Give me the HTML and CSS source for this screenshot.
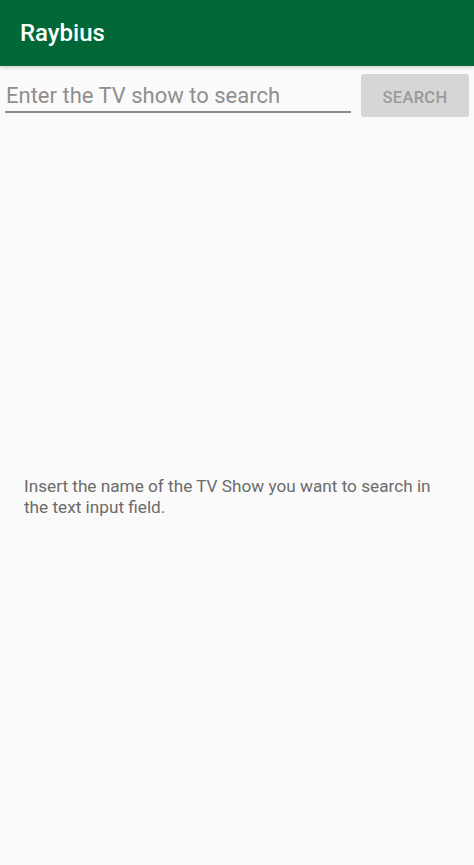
FILE: index.html
```html
<!DOCTYPE html>
<html lang="en">
<head>
  <meta charset="UTF-8" />
  <meta name="viewport" content="width=device-width, initial-scale=1.0" />
  <title>Raybius</title>
  <link rel="stylesheet" href="styles.css">
</head>
<body>
  <header class="app-bar">
    <h1>Raybius</h1>
  </header>
  <div class="search-row">
    <input type="text" class="search-input" placeholder="Enter the TV show to search" />
    <button class="search-btn" disabled>SEARCH</button>
  </div>
  <main class="empty">
    <p>Insert the name of the TV Show you want to search in the text input field.</p>
  </main>
</body>
</html>
```
FILE: styles.css
```css
html, body {
  height: 100%;
}
body {
  margin: 0;
  font-family: Roboto, "Noto Sans", sans-serif;
  background: #fafafa;
  display: flex;
  flex-direction: column;
}
.app-bar {
  background: #006837;
  height: 66px;
  display: flex;
  align-items: center;
  padding: 0 20px;
  box-shadow: 0 2px 4px rgba(0,0,0,0.15);
}
.app-bar h1 {
  margin: 0;
  color: #fff;
  font-size: 24px;
  font-weight: 500;
}
.search-row {
  display: flex;
  align-items: flex-start;
  padding: 8px 5px 0 5px;
  gap: 10px;
}
.search-input {
  flex: 1;
  border: none;
  border-bottom: 2px solid #8c8c8c;
  background: transparent;
  font-family: inherit;
  font-size: 22px;
  padding: 9px 0 3px 1px;
  outline: none;
  color: #333;
}
.search-input::placeholder {
  color: #8f8f8f;
}
.search-btn {
  width: 108px;
  height: 43px;
  border: none;
  border-radius: 3px;
  background: #d6d6d6;
  color: #9a9a9a;
  font-family: inherit;
  font-size: 16.5px;
  font-weight: 500;
  letter-spacing: 0.3px;
  padding: 3px 0 0;
}
.empty {
  flex: 1;
  display: flex;
  align-items: center;
  padding: 12px 24px 0;
}
.empty p {
  margin: 0;
  color: #6b6b6b;
  font-size: 17.2px;
  line-height: 21px;
}
```
